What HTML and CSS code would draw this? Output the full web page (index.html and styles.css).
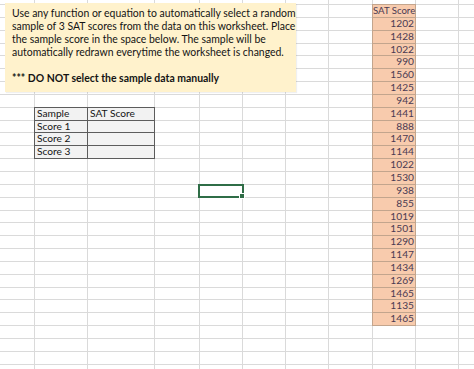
FILE: index.html
```html
<!DOCTYPE html>
<html>
<head>
<meta charset="utf-8">
<link rel="stylesheet" href="styles.css">
</head>
<body>
<div class="sheet">
  <div class="row top"></div>
  <div class="row"><div class="o hdr">SAT Score</div></div>
  <div class="row"><div class="o">1202</div></div>
  <div class="row"><div class="o">1428</div></div>
  <div class="row"><div class="o">1022</div></div>
  <div class="row"><div class="o">990</div></div>
  <div class="row"><div class="o">1560</div></div>
  <div class="row"><div class="o">1425</div></div>
  <div class="row"><div class="o">942</div></div>
  <div class="row"><div class="t tb">Sample</div><div class="t tc">SAT Score</div><div class="o">1441</div></div>
  <div class="row"><div class="t tb">Score 1</div><div class="t tc"></div><div class="o">888</div></div>
  <div class="row"><div class="t tb">Score 2</div><div class="t tc"></div><div class="o">1470</div></div>
  <div class="row"><div class="t tb">Score 3</div><div class="t tc"></div><div class="o">1144</div></div>
  <div class="row"><div class="o">1022</div></div>
  <div class="row"><div class="o">1530</div></div>
  <div class="row"><div class="sel"><span class="handle"></span></div><div class="o">938</div></div>
  <div class="row"><div class="o">855</div></div>
  <div class="row"><div class="o">1019</div></div>
  <div class="row"><div class="o">1501</div></div>
  <div class="row"><div class="o">1290</div></div>
  <div class="row"><div class="o">1147</div></div>
  <div class="row"><div class="o">1434</div></div>
  <div class="row"><div class="o">1269</div></div>
  <div class="row"><div class="o">1465</div></div>
  <div class="row"><div class="o">1135</div></div>
  <div class="row"><div class="o">1465</div></div>
  <div class="row"></div>
  <div class="row"></div>
  <div class="row"></div>
  <div class="row"></div>

  <div class="note">
    <p>Use any function or equation to automatically select a random<br>sample of 3 SAT scores from the data on this worksheet. Place<br>the sample score in the space below. The sample will be<br>automatically redrawn everytime the worksheet is changed.</p>
    <p class="warn">*** DO NOT select the sample data manually</p>
  </div>
</div>
</body>
</html>
```

FILE: styles.css
```css
html, body {
  margin: 0;
  padding: 0;
  background: #ffffff;
}

.sheet {
  position: relative;
  width: 474px;
  height: 369px;
  overflow: hidden;
  font-family: Lato, "Liberation Sans", sans-serif;
  color: #1f1f1f;
  display: flex;
  flex-direction: column;
  background:
    linear-gradient(#dadada, #dadada) 34px 0 / 1px 100% no-repeat,
    linear-gradient(#dadada, #dadada) 87px 0 / 1px 100% no-repeat,
    linear-gradient(#dadada, #dadada) 154px 0 / 1px 100% no-repeat,
    linear-gradient(#dadada, #dadada) 199px 0 / 1px 100% no-repeat,
    linear-gradient(#dadada, #dadada) 242px 0 / 1px 100% no-repeat,
    linear-gradient(#dadada, #dadada) 285px 0 / 1px 100% no-repeat,
    linear-gradient(#dadada, #dadada) 328px 0 / 1px 100% no-repeat,
    linear-gradient(#dadada, #dadada) 372px 0 / 1px 100% no-repeat,
    linear-gradient(#dadada, #dadada) 415px 0 / 1px 100% no-repeat,
    linear-gradient(#dadada, #dadada) 458px 0 / 1px 100% no-repeat,
    #ffffff;
}

.row {
  flex: 0 0 12.85px;
  height: 12.85px;
  display: grid;
  grid-template-columns: 35px 53px 67px 45px 43px 43px 43px 44px 43px 43px 15px;
  background: linear-gradient(#dadada, #dadada) left bottom / 100% 1px no-repeat;
  font-size: 10.2px;
  line-height: 11px;
}

.row.top {
  flex: 0 0 5px;
  height: 5px;
}

/* orange data column */
.o {
  grid-column: 9;
  margin: -1px 0 0 -1px;
  border: 1px solid #c3a58d;
  background: #f8cbad;
  color: #4a3a52;
  text-align: right;
  padding-right: 1px;
  white-space: nowrap;
}

.o.hdr {
  text-align: center;
  padding-right: 0;
  font-size: 9.6px;
}

/* sample table */
.t {
  margin: -1px 0 0 -1px;
  border: 1px solid #5c5c5c;
  background: #f2f2f2;
  padding-left: 2px;
  white-space: nowrap;
  color: #151515;
}

.tb { grid-column: 2; }
.tc { grid-column: 3; }

/* selected cell */
.sel {
  grid-column: 5;
  position: relative;
  margin: -1px -1px 0 -2px;
  border: 2px solid #2f6d47;
  height: 14px;
  box-sizing: border-box;
}

.handle {
  position: absolute;
  right: -3px;
  bottom: -3px;
  width: 4px;
  height: 4px;
  background: #2f6d47;
  border: 1px solid #ffffff;
}

/* floating text box */
.note {
  position: absolute;
  left: 5px;
  top: 3px;
  width: 291px;
  height: 89px;
  box-sizing: border-box;
  padding: 4px 0 0 7px;
  background: #fff2cc;
  box-shadow: 1px 1px 1px rgba(0, 0, 0, 0.06);
  font-size: 10.45px;
  line-height: 13px;
  color: #141414;
  white-space: nowrap;
}

.note p {
  margin: 0;
}

.note .warn {
  margin-top: 13px;
  font-weight: bold;
}
```
